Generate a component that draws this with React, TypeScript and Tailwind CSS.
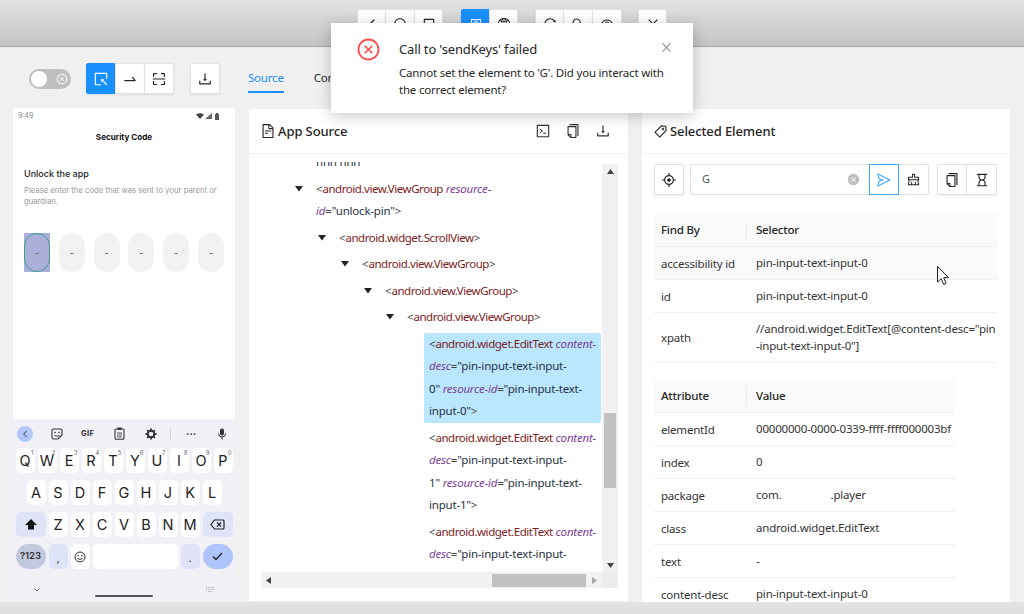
import { ReactNode } from 'react';
import {
  AiOutlineAim,
  AiOutlineAppstore,
  AiOutlineClear,
  AiOutlineClose,
  AiOutlineCloseCircle,
  AiOutlineCode,
  AiOutlineCopy,
  AiOutlineDownload,
  AiOutlineFileText,
  AiOutlineGlobal,
  AiOutlineHourglass,
  AiOutlineReload,
  AiOutlineScan,
  AiOutlineSearch,
  AiOutlineSelect,
  AiOutlineSend,
  AiOutlineSwapRight,
  AiOutlineTag,
  AiFillCloseCircle,
  AiOutlineEye,
} from 'react-icons/ai';
import { BiCircle, BiSquare } from 'react-icons/bi';
import { IoChevronBackOutline } from 'react-icons/io5';

const Attr = ({ children }: { children: ReactNode }) => (
  <i className="text-[#7b3f98]">{children}</i>
);
const Tag = ({ children }: { children: ReactNode }) => (
  <span className="tracking-[-0.45px] text-[#7c2222]">{children}</span>
);
const Dim = ({ children }: { children: ReactNode }) => (
  <span className="text-[#444]">{children}</span>
);
const Val = ({ children }: { children: ReactNode }) => (
  <span className="text-[#26323f]">{children}</span>
);

function Caret() {
  return (
    <svg width="8" height="6" viewBox="0 0 8 6" className="absolute left-[-16px] top-[8px]">
      <path d="M0 0h8L4 5.5z" fill="#222" />
    </svg>
  );
}

function TreeRow({ indent, caret, selected, children }: { indent: string; caret?: boolean; selected?: boolean; children: ReactNode }) {
  return (
    <div className={`${indent} mb-[4px] w-full`}>
      <div className={`relative pl-[5px] rounded-[2px] leading-[22.5px] ${selected ? 'bg-[#bae7ff]' : ''}`}>
        {caret && <Caret />}
        {children}
      </div>
    </div>
  );
}

function EditTextNode({ n, selected }: { n: string; selected?: boolean }) {
  return (
    <TreeRow indent="pl-[174px]" selected={selected}>
      <Dim>&lt;</Dim>
      <Tag>android.widget.EditText</Tag>&nbsp;<Attr>content-desc</Attr>
      <Dim>=</Dim>
      <Val>"pin-input-text-input-{n}"</Val>&nbsp;<Attr>resource-id</Attr>
      <Dim>=</Dim>
      <Val>"pin-input-text-input-{n}"</Val>
      <Dim>&gt;</Dim>
    </TreeRow>
  );
}

function SourceTree() {
  return (
    <div className="flex-1 min-w-0 overflow-hidden text-[11.5px] tracking-[-0.2px] font-['Noto_Sans',sans-serif]">
      <div className="mt-[-11px] w-[351px]">
        <TreeRow indent="pl-[61px]">
          <Val>nnn nnn</Val>
        </TreeRow>
        <TreeRow indent="pl-[61px] pr-[100px]" caret>
          <Dim>&lt;</Dim>
          <Tag>android.view.ViewGroup</Tag>&nbsp;<Attr>resource-id</Attr>
          <Dim>=</Dim>
          <Val>"unlock-pin"</Val>
          <Dim>&gt;</Dim>
        </TreeRow>
        <TreeRow indent="pl-[84px]" caret>
          <Dim>&lt;</Dim>
          <Tag>android.widget.ScrollView</Tag>
          <Dim>&gt;</Dim>
        </TreeRow>
        <TreeRow indent="pl-[107px]" caret>
          <Dim>&lt;</Dim>
          <Tag>android.view.ViewGroup</Tag>
          <Dim>&gt;</Dim>
        </TreeRow>
        <TreeRow indent="pl-[130px]" caret>
          <Dim>&lt;</Dim>
          <Tag>android.view.ViewGroup</Tag>
          <Dim>&gt;</Dim>
        </TreeRow>
        <TreeRow indent="pl-[152px]" caret>
          <Dim>&lt;</Dim>
          <Tag>android.view.ViewGroup</Tag>
          <Dim>&gt;</Dim>
        </TreeRow>
        <EditTextNode n="0" selected />
        <EditTextNode n="1" />
        <EditTextNode n="2" />
      </div>
    </div>
  );
}

function ToolButton({ active, className, children }: { active?: boolean; className?: string; children: ReactNode }) {
  return (
    <div
      className={`flex items-center justify-center border shadow-[0_1px_2px_rgba(0,0,0,0.08)] ${active ? 'bg-[#1890ff] border-[#1890ff] text-white' : 'bg-white border-[#e2e2e2] text-[#262626]'} ${className ?? ''}`}
    >
      {children}
    </div>
  );
}

const keyBase =
  "flex h-[25px] w-[19px] items-center justify-center rounded-[5px] bg-white text-[14.5px] text-[#222] font-['Inter',sans-serif]";

function LetterKey({ label, sup }: { label: string; sup?: string }) {
  return (
    <div className={`${keyBase} relative`}>
      {label}
      {sup && <span className="absolute right-[1px] top-[0px] text-[6px] leading-[9px] text-[#666]">{sup}</span>}
    </div>
  );
}

function Keyboard() {
  const row1 = ['Q', 'W', 'E', 'R', 'T', 'Y', 'U', 'I', 'O', 'P'];
  const sups = ['1', '2', '3', '4', '5', '6', '7', '8', '9', '0'];
  return (
    <div className="mt-auto h-[183px] bg-[#f1f0f6] font-['Inter',sans-serif]">
      <div className="flex h-[29px] items-center pl-[4px] pr-[8px] text-[#333]">
        <div className="flex h-[16px] w-[16px] items-center justify-center rounded-full bg-[#b3c7fb] text-[#1e2a55]">
          <IoChevronBackOutline size={10} strokeWidth={40} />
        </div>
        <svg width="12" height="12" viewBox="0 0 12 12" className="ml-[18px]">
          <path d="M2.5 1h7A1.5 1.5 0 0 1 11 2.5V7L7 11H2.5A1.5 1.5 0 0 1 1 9.500V2.500A1.500 1.500 0 0 1 2.500 1z" fill="none" stroke="#333" strokeWidth="1.100" />
          <path d="M3.500 7.500q2.500 1.500 5 0" fill="none" stroke="#333" />
          <circle cx="4" cy="4.500" r=".8" fill="#333" />
          <circle cx="8" cy="4.500" r=".8" fill="#333" />
        </svg>
        <span className="ml-[18px] text-[7.500px] font-extrabold tracking-[0.3px] text-[#444]">GIF</span>
        <svg width="11" height="13" viewBox="0 0 11 13" className="ml-[20px]">
          <rect x="1" y="2" width="9" height="10.300" rx="1" fill="none" stroke="#333" strokeWidth="1.100" />
          <rect x="3.500" y=".5" width="4" height="2.500" fill="#333" />
          <path d="M3 6h5M3 8h5M3 10h5" stroke="#333" strokeWidth=".8" />
        </svg>
        <svg width="12" height="12" viewBox="0 0 12 12" className="ml-[20px]">
          <circle cx="6" cy="6" r="3.300" fill="none" stroke="#333" strokeWidth="2" />
          <path d="M6 .5v2M6 9.500v2M.5 6h2M9.500 6h2M2.200 2.200l1.400 1.400M8.400 8.400l1.400 1.400M9.800 2.200 8.400 3.600M3.600 8.400 2.200 9.800" stroke="#333" strokeWidth="1.800" />
        </svg>
        <div className="ml-[13px] h-[12px] w-px bg-[#d0d0d8]" />
        <span className="ml-[15px] mb-[5px] text-[10px] font-bold leading-none text-[#444]">...</span>
        <svg width="8" height="12" viewBox="0 0 8 12" className="ml-[22px]">
          <rect x="2" y=".5" width="4" height="7" rx="2" fill="#333" />
          <path d="M.5 5.500a3.500 3.500 0 0 0 7 0M4 9v2.500" fill="none" stroke="#333" />
        </svg>
      </div>
      <div className="flex flex-col gap-[7px]">
        <div className="flex justify-center gap-[3px]">
          {row1.map((k, i) => (
            <LetterKey key={k} label={k} sup={sups[i]} />
          ))}
        </div>
        <div className="flex justify-center gap-[3px]">
          {['A', 'S', 'D', 'F', 'G', 'H', 'J', 'K', 'L'].map((k) => (
            <LetterKey key={k} label={k} />
          ))}
        </div>
        <div className="flex justify-center gap-[3px]">
          <div className="flex h-[25px] w-[30px] items-center justify-center rounded-[5px] bg-[#dfe3f8]">
            <svg width="12" height="11" viewBox="0 0 12 11">
              <path d="M6 0 12 6H9v4.500H3V6H0z" fill="#111" />
            </svg>
          </div>
          {['Z', 'X', 'C', 'V', 'B', 'N', 'M'].map((k) => (
            <LetterKey key={k} label={k} />
          ))}
          <div className="flex h-[25px] w-[30px] items-center justify-center rounded-[5px] bg-[#dfe3f8]">
            <svg width="15" height="11" viewBox="0 0 15 11">
              <path d="M4.500 1H13a1 1 0 0 1 1 1v7a1 1 0 0 1-1 1H4.500L1 5.500z" fill="none" stroke="#222" strokeWidth="1.200" />
              <path d="m7 3.500 4 4M11 3.500l-4 4" stroke="#222" strokeWidth="1.200" />
            </svg>
          </div>
        </div>
        <div className="flex justify-center gap-[3px]">
          <div className="flex h-[25px] w-[30px] items-center justify-center rounded-[13px] bg-[#c2c8dd] text-[9.500px] font-semibold text-[#333]">?123</div>
          <div className="flex h-[25px] w-[19px] items-center justify-center rounded-[5px] bg-[#dfe3f8] pt-[3px] text-[11px] text-[#333]">,</div>
          <div className="flex h-[25px] w-[19px] items-center justify-center rounded-[5px] bg-white">
            <svg width="12" height="12" viewBox="0 0 12 12">
              <circle cx="6" cy="6" r="5" fill="none" stroke="#333" />
              <circle cx="4.200" cy="4.800" r=".8" fill="#333" />
              <circle cx="7.800" cy="4.800" r=".8" fill="#333" />
              <path d="M3.500 7.300q2.500 2.300 5 0" fill="none" stroke="#333" />
            </svg>
          </div>
          <div className="h-[25px] w-[85px] rounded-[5px] bg-white" />
          <div className="flex h-[25px] w-[19px] items-center justify-center rounded-[5px] bg-[#dfe3f8] pt-[3px] text-[11px] text-[#333]">.</div>
          <div className="flex h-[25px] w-[30px] items-center justify-center rounded-[13px] bg-[#aec4fb]">
            <svg width="11" height="9" viewBox="0 0 11 9">
              <path d="m1 4.500 3 3 6-6.500" fill="none" stroke="#222" strokeWidth="1.300" />
            </svg>
          </div>
        </div>
      </div>
      <div className="mt-[7px] flex h-[28px] items-center justify-between pl-[21px] pr-[20px]">
        <svg width="6" height="4" viewBox="0 0 6 4">
          <path d="m.5.500 2.500 2.500L5.500.5" fill="none" stroke="#666" />
        </svg>
        <svg width="9" height="7" viewBox="0 0 9 7">
          <path d="M0 .5h9M0 2.500h9M2 4.500h5" stroke="#aaa" strokeDasharray="1 .8" />
        </svg>
      </div>
      <div className="mx-auto h-[2px] w-[58px] translate-y-[-9px] rounded-full bg-[#555]" />
    </div>
  );
}

function PhoneScreen() {
  return (
    <div className="mt-[-1px] flex h-[494px] w-[222px] flex-col bg-white font-['Inter',sans-serif]">
      <div className="flex h-[14px] items-center justify-between pl-[5px] pr-[15px] pt-[2px] text-[#888]">
        <span className="text-[7px]">9:49</span>
        <div className="flex items-center gap-[1px]">
          <svg width="8" height="6" viewBox="0 0 8 6"><path d="M0 1.500Q4-1 8 1.500L4 6z" fill="#444" /></svg>
          <svg width="7" height="6" viewBox="0 0 7 6"><path d="M7 0v6H0z" fill="#666" /></svg>
          <svg width="6" height="7" viewBox="0 0 6 7" className="ml-[1px]"><path d="M2 0h2v1h1v6H1V1h1z" fill="#555" /></svg>
        </div>
      </div>
      <div className="mt-[9px] text-center text-[8.100px] font-bold leading-[12px] text-[#111]">Security Code</div>
      <div className="mt-[24px] pl-[11px] text-[9px] font-medium leading-[14px] text-[#222]">Unlock the app</div>
      <div className="mt-[4px] px-[11px] text-[7.700px] leading-[11px] text-[#999]">Please enter the code that was sent to your parent or guardian.</div>
      <div className="mt-[26px] flex justify-between pl-[11px] pr-[11px]">
        <div className="flex h-[39px] w-[26px] items-center justify-center bg-[#aaaed8]">
          <div className="flex h-full w-full items-center justify-center rounded-[13px] border border-[#3f9c93] text-[9px] font-semibold text-[#666]">-</div>
        </div>
        {[1, 2, 3, 4, 5].map((i) => (
          <div key={i} className="flex h-[39px] w-[26px] items-center justify-center rounded-[13px] bg-[#f2f2f2] text-[9px] font-semibold text-[#666]">-</div>
        ))}
      </div>
      <Keyboard />
    </div>
  );
}

function ScrollArrow({ d }: { d: string }) {
  return (
    <svg width="7" height="7" viewBox="0 0 7 7">
      <path d={d} fill="#444" />
    </svg>
  );
}

function SourcePanel() {
  return (
    <div className="flex h-[492px] w-[379px] flex-col bg-white">
      <div className="flex h-[45px] shrink-0 items-center border-b border-[#f0f0f0] pl-[11px] pr-[17px] text-[#262626]">
        <AiOutlineFileText size={16} />
        <span className="ml-[2px] pt-[1px] text-[13px] tracking-[-0.1px] font-medium">App Source</span>
        <div className="ml-auto flex items-center gap-[14px] text-[#333]">
          <AiOutlineCode size={16} />
          <AiOutlineCopy size={16} />
          <AiOutlineDownload size={16} />
        </div>
      </div>
      <div className="flex min-h-0 flex-1 flex-col pb-[13px] pl-[1px] pr-[10px] pt-[8px]">
        <div className="flex min-h-0 flex-1">
          <SourceTree />
          <div className="mt-[2px] flex w-[16px] shrink-0 flex-col items-center bg-[#f1f1f1] pb-[3px] pt-[4px]">
            <ScrollArrow d="M3.500 1 7 6H0z" />
            <div className="mt-[238px] h-[75px] w-[12px] shrink-0 bg-[#c1c1c1]" />
            <div className="mt-auto">
              <ScrollArrow d="M3.500 6 0 1h7z" />
            </div>
          </div>
        </div>
        <div className="ml-[11px] flex h-[16px] shrink-0">
          <div className="flex flex-1 items-center bg-[#f1f1f1] px-[4px]">
            <ScrollArrow d="M1 3.500 6 0v7z" />
            <div className="ml-[220px] h-[13px] w-[94px] bg-[#c1c1c1]" />
            <div className="ml-auto">
              <svg width="7" height="7" viewBox="0 0 7 7"><path d="M6 3.500 1 0v7z" fill="#a3a3a3" /></svg>
            </div>
          </div>
          <div className="w-[16px] bg-[#ececec]" />
        </div>
      </div>
    </div>
  );
}

function TableHead({ a, b }: { a: string; b: string }) {
  return (
    <div className="flex h-[33px] items-center border-b border-[#f0f0f0] bg-[#fafafa] font-medium text-[#262626]">
      <div className="flex h-[18px] w-[93px] shrink-0 items-center border-r border-[#ececec] pl-[7px]">{a}</div>
      <div className="pl-[9px]">{b}</div>
    </div>
  );
}

function TableRow({ a, b, hover, tall }: { a: string; b: ReactNode; hover?: boolean; tall?: boolean }) {
  return (
    <div className={`flex items-center border-b border-[#f0f0f0] ${tall ? 'h-[50px]' : 'h-[33px]'} ${hover ? 'bg-[#fafafa]' : ''}`}>
      <div className="w-[93px] shrink-0 pl-[7px] pt-[1px]">{a}</div>
      <div className="min-w-0 pl-[9px] pr-[1px] pt-[1px] leading-[16.700px] break-all">{b}</div>
    </div>
  );
}

function SelectedPanel() {
  return (
    <div className="flex h-[493px] w-[368px] flex-col overflow-hidden bg-white">
      <div className="flex h-[45px] shrink-0 items-center border-b border-[#f0f0f0] pl-[11px] text-[#262626]">
        <AiOutlineTag size={15} />
        <span className="ml-[2px] pt-[1px] text-[13px] tracking-[-0.1px] font-medium">Selected Element</span>
      </div>
      <div className="flex pl-[12px] pt-[10px]">
        <ToolButton className="h-[31px] w-[30px] rounded-[2px]">
          <AiOutlineAim size={16} />
        </ToolButton>
        <div className="ml-[6px] flex h-[31px] w-[239px] items-center rounded-[2px] border border-[#e2e2e2]">
          <span className="ml-[11px] flex-1 text-[11px] text-[#555]">G</span>
          <AiFillCloseCircle size={13} className="mr-[9px] text-[#bfbfbf]" />
          <div className="flex h-[31px] w-[30px] shrink-0 items-center justify-center border border-[#40a9ff] text-[#40a9ff]">
            <AiOutlineSend size={16} />
          </div>
          <div className="flex h-[31px] w-[29px] shrink-0 items-center justify-center text-[#262626]">
            <AiOutlineClear size={15} />
          </div>
        </div>
        <div className="ml-[8px] flex">
          <ToolButton className="h-[31px] w-[30px] rounded-l-[2px]">
            <AiOutlineCopy size={16} />
          </ToolButton>
          <ToolButton className="ml-[-1px] h-[31px] w-[31px] rounded-r-[2px]">
            <AiOutlineHourglass size={16} />
          </ToolButton>
        </div>
      </div>
      <div className="mx-[12px] mt-[19px] text-[11.500px] tracking-[-0.2px] text-[#333]">
        <div className="w-[343px]">
          <TableHead a="Find By" b="Selector" />
          <TableRow a="accessibility id" b="pin-input-text-input-0" hover />
          <TableRow a="id" b="pin-input-text-input-0" />
          <TableRow a="xpath" b={'//android.widget.EditText[@content-desc="pin-input-text-input-0"]'} tall />
        </div>
        <div className="mt-[17px] w-[301px]">
          <TableHead a="Attribute" b="Value" />
          <TableRow a="elementId" b="00000000-0000-0339-ffff-ffff000003bf" />
          <TableRow a="index" b="0" />
          <TableRow a="package" b={<span>com.<span className="ml-[49px]">.player</span></span>} />
          <TableRow a="class" b="android.widget.EditText" />
          <TableRow a="text" b="-" />
          <TableRow a="content-desc" b="pin-input-text-input-0" />
        </div>
      </div>
    </div>
  );
}

export default function App() {
  return (
    <div className="relative flex h-[614px] w-[1024px] flex-col overflow-hidden bg-[#f0f0f0] text-[12px] text-[#262626] font-['Noto_Sans',sans-serif]">
      {/* Session header */}
      <div className="flex h-[47px] shrink-0 items-start border-b border-[#a8a8a8] bg-gradient-to-b from-[#e2e2e2] to-[#c4c4c4] pl-[357px] pt-[9px]">
        <ToolButton className="h-[30px] w-[29px] rounded-l-[2px]"><IoChevronBackOutline size={14} /></ToolButton>
        <ToolButton className="ml-[-1px] h-[30px] w-[30px]"><BiCircle size={14} /></ToolButton>
        <ToolButton className="ml-[-1px] h-[30px] w-[29px] rounded-r-[2px]"><BiSquare size={14} /></ToolButton>
        <ToolButton active className="ml-[18px] h-[30px] w-[29px] rounded-l-[2px]"><AiOutlineAppstore size={14} /></ToolButton>
        <ToolButton className="ml-[-1px] h-[30px] w-[29px] rounded-r-[2px]"><AiOutlineGlobal size={14} /></ToolButton>
        <ToolButton className="ml-[17px] h-[30px] w-[29px] rounded-l-[2px]"><AiOutlineReload size={14} /></ToolButton>
        <ToolButton className="ml-[-1px] h-[30px] w-[30px]"><AiOutlineSearch size={14} /></ToolButton>
        <ToolButton className="ml-[-1px] h-[30px] w-[30px] rounded-r-[2px]"><AiOutlineEye size={14} /></ToolButton>
        <ToolButton className="ml-[16px] h-[30px] w-[29px] rounded-[2px]"><AiOutlineClose size={14} /></ToolButton>
      </div>

      {/* Toolbar */}
      <div className="flex h-[62px] shrink-0 items-start pl-[29px] pt-[16px]">
        <div className="mt-[6px] flex h-[20px] w-[42px] items-center justify-between rounded-full bg-[#bfbfbf] px-[2px]">
          <div className="h-[16px] w-[16px] rounded-full bg-white" />
          <AiOutlineCloseCircle size={12} className="mr-[1px] text-white" />
        </div>
        <div className="ml-[15px] flex">
          <ToolButton active className="h-[31px] w-[29px] rounded-l-[2px]"><AiOutlineSelect size={16} /></ToolButton>
          <ToolButton className="h-[31px] w-[30px]"><AiOutlineSwapRight size={16} /></ToolButton>
          <ToolButton className="ml-[-1px] h-[31px] w-[30px] rounded-r-[2px]"><AiOutlineScan size={16} /></ToolButton>
        </div>
        <ToolButton className="ml-[16px] h-[31px] w-[30px] rounded-[2px]"><AiOutlineDownload size={16} /></ToolButton>
        <div className="ml-[28px] flex h-[31px] items-start text-[11.500px] tracking-[-0.2px]">
          <div className="h-[30px] border-b-2 border-[#1890ff] pt-[6px] leading-[17px] text-[#1890ff]">Source</div>
          <div className="ml-[30px] pt-[6px] leading-[17px] text-[#262626]">Commands</div>
        </div>
      </div>

      {/* Panels */}
      <div className="flex items-start gap-[14px] pl-[13px]">
        <PhoneScreen />
        <SourcePanel />
        <SelectedPanel />
      </div>

      <div className="mt-auto h-[12px] bg-gradient-to-b from-[#e4e4e4] to-[#dcdcdc]" />

      {/* Pointer from the capture */}
      <svg width="12" height="20" viewBox="0 0 12 20" className="absolute left-[937px] top-[266px]">
        <path d="M.5.5v15.500l3.700-3.500 2.400 6 2.500-1-2.400-5.800h5z" fill="#fff" stroke="#222" />
      </svg>

      {/* Error notification */}
      <div className="absolute left-[331px] top-[23px] h-[90px] w-[362px] bg-white shadow-[0_3px_14px_rgba(0,0,0,0.22)]">
        <AiOutlineCloseCircle size={25} className="absolute left-[25px] top-[14px] text-[#ff4d4f]" />
        <AiOutlineClose size={13} className="absolute right-[20px] top-[18px] text-[#888]" />
        <div className="pl-[68px] pr-[24px] pt-[16px]">
          <div className="text-[13px] leading-[21px] tracking-[-0.15px] text-[#262626]">Call to 'sendKeys' failed</div>
          <div className="mt-[4px] text-[11.500px] leading-[17px] tracking-[-0.2px] text-[#262626]">Cannot set the element to 'G'. Did you interact with the correct element?</div>
        </div>
      </div>
    </div>
  );
}
